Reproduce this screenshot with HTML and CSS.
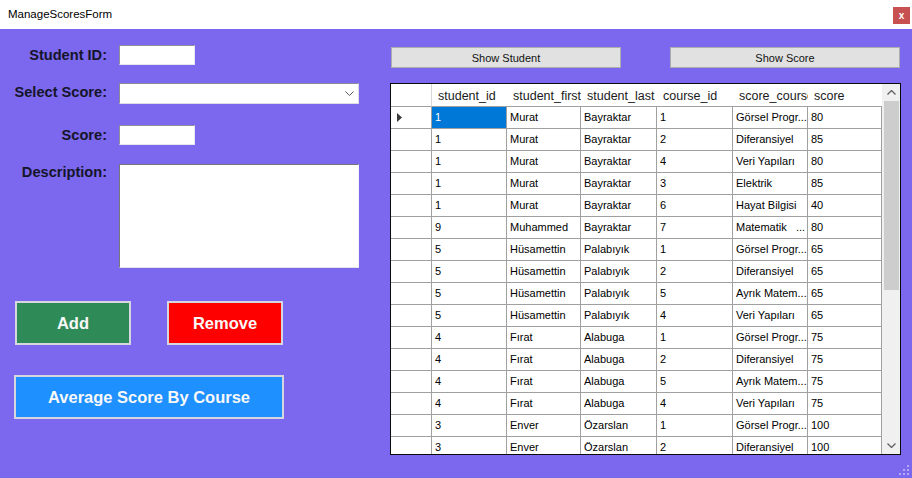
FILE: index.html
```html
<!DOCTYPE html>
<html lang="tr">
<head>
<meta charset="utf-8">
<title>ManageScoresForm</title>
<link rel="stylesheet" href="styles.css">
</head>
<body>
<div class="window">
  <div class="titlebar">
    <span class="title">ManageScoresForm</span>
    <span class="close">x</span>
  </div>
  <div class="client">
    <div class="left">
      <div class="field f1">
        <label class="lbl">Student ID:</label>
        <div class="tb tb-small"></div>
      </div>
      <div class="field f2">
        <label class="lbl lbl-sel">Select Score:</label>
        <div class="combo">
          <svg class="combo-arrow" width="9" height="5" viewBox="0 0 9 5"><polyline points="0.5,0.5 4.5,4.5 8.5,0.5" fill="none" stroke="#5a5a5a" stroke-width="1"/></svg>
        </div>
      </div>
      <div class="field f3">
        <label class="lbl">Score:</label>
        <div class="tb tb-small"></div>
      </div>
      <div class="field f4">
        <label class="lbl lbl-top">Description:</label>
        <div class="tb tb-area"></div>
      </div>
      <div class="btn-row">
        <button class="btn btn-add">Add</button>
        <button class="btn btn-remove">Remove</button>
      </div>
      <button class="btn btn-avg">Average Score By Course</button>
    </div>
    <div class="right">
      <div class="show-row">
        <button class="sbtn">Show Student</button>
        <button class="sbtn">Show Score</button>
      </div>
      <div class="dgv">
        <div class="dgv-body">
          <div class="row head">
            <div class="cell rh"></div>
            <div class="cell">student_id</div>
            <div class="cell">student_first</div>
            <div class="cell">student_last</div>
            <div class="cell">course_id</div>
            <div class="cell">score_course</div>
            <div class="cell">score</div>
          </div>
          <div class="row"><div class="cell rh"><svg width="5" height="9" viewBox="0 0 5 9"><polygon points="0,0 5,4.5 0,9" fill="#3a3a3a"/></svg></div><div class="cell sel">1</div><div class="cell">Murat</div><div class="cell">Bayraktar</div><div class="cell">1</div><div class="cell">Görsel Progr...</div><div class="cell">80</div></div>
          <div class="row"><div class="cell rh"></div><div class="cell">1</div><div class="cell">Murat</div><div class="cell">Bayraktar</div><div class="cell">2</div><div class="cell">Diferansiyel</div><div class="cell">85</div></div>
          <div class="row"><div class="cell rh"></div><div class="cell">1</div><div class="cell">Murat</div><div class="cell">Bayraktar</div><div class="cell">4</div><div class="cell">Veri Yapıları</div><div class="cell">80</div></div>
          <div class="row"><div class="cell rh"></div><div class="cell">1</div><div class="cell">Murat</div><div class="cell">Bayraktar</div><div class="cell">3</div><div class="cell">Elektrik</div><div class="cell">85</div></div>
          <div class="row"><div class="cell rh"></div><div class="cell">1</div><div class="cell">Murat</div><div class="cell">Bayraktar</div><div class="cell">6</div><div class="cell">Hayat Bilgisi</div><div class="cell">40</div></div>
          <div class="row"><div class="cell rh"></div><div class="cell">9</div><div class="cell">Muhammed</div><div class="cell">Bayraktar</div><div class="cell">7</div><div class="cell pre">Matematik   ...</div><div class="cell">80</div></div>
          <div class="row"><div class="cell rh"></div><div class="cell">5</div><div class="cell">Hüsamettin</div><div class="cell">Palabıyık</div><div class="cell">1</div><div class="cell">Görsel Progr...</div><div class="cell">65</div></div>
          <div class="row"><div class="cell rh"></div><div class="cell">5</div><div class="cell">Hüsamettin</div><div class="cell">Palabıyık</div><div class="cell">2</div><div class="cell">Diferansiyel</div><div class="cell">65</div></div>
          <div class="row"><div class="cell rh"></div><div class="cell">5</div><div class="cell">Hüsamettin</div><div class="cell">Palabıyık</div><div class="cell">5</div><div class="cell">Ayrık Matem...</div><div class="cell">65</div></div>
          <div class="row"><div class="cell rh"></div><div class="cell">5</div><div class="cell">Hüsamettin</div><div class="cell">Palabıyık</div><div class="cell">4</div><div class="cell">Veri Yapıları</div><div class="cell">65</div></div>
          <div class="row"><div class="cell rh"></div><div class="cell">4</div><div class="cell">Fırat</div><div class="cell">Alabuga</div><div class="cell">1</div><div class="cell">Görsel Progr...</div><div class="cell">75</div></div>
          <div class="row"><div class="cell rh"></div><div class="cell">4</div><div class="cell">Fırat</div><div class="cell">Alabuga</div><div class="cell">2</div><div class="cell">Diferansiyel</div><div class="cell">75</div></div>
          <div class="row"><div class="cell rh"></div><div class="cell">4</div><div class="cell">Fırat</div><div class="cell">Alabuga</div><div class="cell">5</div><div class="cell">Ayrık Matem...</div><div class="cell">75</div></div>
          <div class="row"><div class="cell rh"></div><div class="cell">4</div><div class="cell">Fırat</div><div class="cell">Alabuga</div><div class="cell">4</div><div class="cell">Veri Yapıları</div><div class="cell">75</div></div>
          <div class="row"><div class="cell rh"></div><div class="cell">3</div><div class="cell">Enver</div><div class="cell">Özarslan</div><div class="cell">1</div><div class="cell">Görsel Progr...</div><div class="cell">100</div></div>
          <div class="row"><div class="cell rh"></div><div class="cell">3</div><div class="cell">Enver</div><div class="cell">Özarslan</div><div class="cell">2</div><div class="cell">Diferansiyel</div><div class="cell">100</div></div>
        </div>
        <div class="vscroll">
          <div class="sb-btn"><svg width="9" height="5" viewBox="0 0 9 5"><polyline points="0.5,4.5 4.5,0.5 8.5,4.5" fill="none" stroke="#606060" stroke-width="1.3"/></svg></div>
          <div class="sb-track"><div class="sb-thumb"></div></div>
          <div class="sb-btn"><svg width="9" height="5" viewBox="0 0 9 5"><polyline points="0.5,0.5 4.5,4.5 8.5,0.5" fill="none" stroke="#606060" stroke-width="1.3"/></svg></div>
        </div>
      </div>
    </div>
  </div>
  <svg class="grip" width="11" height="11" viewBox="0 0 11 11">
    <rect x="8" y="0" width="2" height="2" fill="#b3a9f3"/>
    <rect x="4" y="4" width="2" height="2" fill="#b3a9f3"/>
    <rect x="8" y="4" width="2" height="2" fill="#b3a9f3"/>
    <rect x="0" y="8" width="2" height="2" fill="#b3a9f3"/>
    <rect x="4" y="8" width="2" height="2" fill="#b3a9f3"/>
    <rect x="8" y="8" width="2" height="2" fill="#b3a9f3"/>
  </svg>
</div>
</body>
</html>
```
FILE: styles.css
```css
* { box-sizing: border-box; }
html, body { margin: 0; padding: 0; }
body {
  width: 912px;
  height: 478px;
  overflow: hidden;
  font-family: "Liberation Sans", Arial, sans-serif;
  background: #7b68ee;
}
.window {
  position: relative;
  width: 912px;
  height: 478px;
  display: flex;
  flex-direction: column;
}
.titlebar {
  height: 29px;
  background: #ffffff;
  display: flex;
  align-items: center;
  justify-content: space-between;
  padding: 0 2px 0 8px;
}
.title {
  font-size: 11.5px;
  color: #000;
  margin-top: -1px;
}
.close {
  width: 17px;
  height: 17px;
  background: #c75050;
  color: #fff;
  font-size: 10px;
  font-weight: bold;
  display: flex;
  align-items: center;
  justify-content: center;
  margin-top: 2px;
}
.client {
  flex: 1;
  display: flex;
  background: #7b68ee;
}
.left {
  width: 390px;
  padding-top: 16px;
  display: flex;
  flex-direction: column;
  align-items: flex-start;
}
.field {
  display: flex;
  align-items: center;
}
.f2 { margin-top: 18px; }
.f3 { margin-top: 21px; }
.f4 { margin-top: 19px; align-items: flex-start; }
.lbl {
  width: 107px;
  margin-right: 12px;
  text-align: right;
  font-size: 14.6px;
  font-weight: bold;
  color: #15152a;
  white-space: nowrap;
}
.lbl-sel { margin-bottom: 3px; }
.lbl-top { line-height: 16px; margin-top: 0; }
.tb {
  background: #fff;
  border-style: solid;
  border-width: 1px;
  border-color: #8f8f9a #e6e6ee #e6e6ee #8f8f9a;
}
.tb-small { width: 76px; height: 20px; }
.tb-area { width: 240px; height: 104px; border-color: #777 #f2f2f2 #e4e4ea #777; }
.combo {
  width: 240px;
  height: 21px;
  background: #fff;
  border-style: solid;
  border-width: 1px;
  border-color: #8a8a96 #dcdce4 #dcdce4 #8a8a96;
  display: flex;
  align-items: center;
  justify-content: flex-end;
  padding-right: 4px;
}
.btn {
  font-family: "Liberation Sans", Arial, sans-serif;
  font-weight: bold;
  font-size: 16.5px;
  color: #f8f8f8;
  border: 2px solid #d6d6de;
  padding: 0;
  height: 44px;
}
.btn-row {
  display: flex;
  gap: 36px;
  margin-top: 33px;
  margin-left: 15px;
}
.btn-add { width: 116px; background: #2e8b57; }
.btn-remove { width: 116px; background: #ff0000; }
.btn-avg {
  width: 270px;
  margin-top: 30px;
  margin-left: 14px;
  background: #1e90ff;
}
.right {
  width: 522px;
  padding-top: 18px;
}
.show-row {
  width: 510px;
  display: flex;
  justify-content: space-between;
  padding-left: 1px;
}
.sbtn {
  width: 230px;
  height: 21px;
  background: #e1e1e1;
  border: 1px solid #adadad;
  font-family: "Liberation Sans", Arial, sans-serif;
  font-size: 11px;
  color: #111;
  padding: 0;
}
.dgv {
  margin-top: 15px;
  width: 511px;
  height: 372px;
  border: 1px solid #0a0a0a;
  display: flex;
  background: #fff;
  overflow: hidden;
}
.dgv-body {
  width: 491px;
  overflow: hidden;
}
.row {
  display: grid;
  grid-template-columns: 41px 75px 74px 76px 76px 75px 74px;
  height: 22px;
}
.row.head { height: 23px; }
.cell {
  border-right: 1px solid #a0a0a0;
  border-bottom: 1px solid #a0a0a0;
  font-size: 11px;
  color: #000;
  padding-left: 3px;
  line-height: 21px;
  white-space: nowrap;
  overflow: hidden;
}
.cell.pre { white-space: pre; }
.head .cell {
  border-right: none;
  font-size: 12.5px;
  padding-left: 6px;
  line-height: 24px;
  color: #1a1a1a;
}
.head .cell.rh { border-right: 1px solid #d8d8d8; }
.rh {
  display: flex;
  align-items: center;
  padding-left: 6px;
}
.sel {
  background: #0078d7;
  color: #fff;
}
.vscroll {
  width: 18px;
  background: #f0f0f0;
  display: flex;
  flex-direction: column;
  border-left: 1px solid #f0f0f0;
}
.sb-btn {
  height: 17px;
  display: flex;
  align-items: center;
  justify-content: center;
}
.sb-track {
  flex: 1;
  padding: 0 1px;
}
.sb-thumb {
  height: 189px;
  background: #cdcdcd;
}
.grip {
  position: absolute;
  right: 2px;
  bottom: 2px;
}
```
